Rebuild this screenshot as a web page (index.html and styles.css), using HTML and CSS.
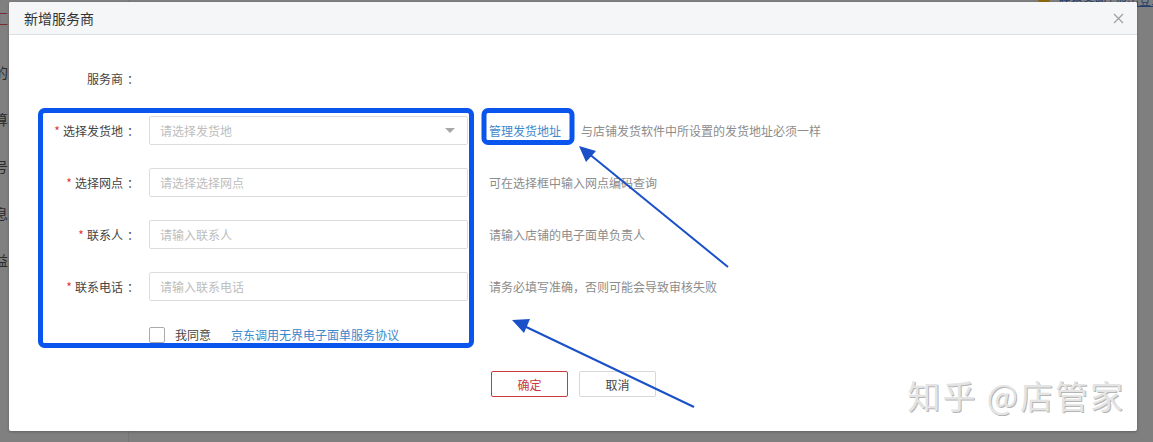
FILE: index.html
```html
<!DOCTYPE html>
<html lang="zh">
<head>
<meta charset="utf-8">
<title>新增服务商</title>
<link rel="stylesheet" href="styles.css">
</head>
<body>
<div class="page">
  <aside class="side">
    <div class="side-item side-red">汇</div>
    <div class="side-item">的</div>
    <div class="side-item">算</div>
    <div class="side-item">号</div>
    <div class="side-item">息</div>
    <div class="side-item">益</div>
  </aside>
  <div class="topbar"><span class="top-dot"></span><span class="top-link">联系客服 | 退出登录</span></div>
</div>

<div class="modal">
  <div class="modal-head">
    <span class="modal-title">新增服务商</span>
    <svg class="close" width="11" height="11" viewBox="0 0 11 11"><path d="M1 1L10 10M10 1L1 10" stroke="#a0a0a0" stroke-width="1.2" fill="none"/></svg>
  </div>
  <div class="modal-body">
    <div class="row">
      <label class="lbl">服务商<span class="colon">：</span></label>
      <div class="field"></div>
    </div>
    <div class="row">
      <label class="lbl"><span class="req">*</span>选择发货地<span class="colon">：</span></label>
      <div class="field select"><span class="ph">请选择发货地</span><span class="caret"></span></div>
      <div class="hint"><a class="link">管理发货地址</a><span class="hint-text after-link">与店铺发货软件中所设置的发货地址必须一样</span></div>
    </div>
    <div class="row">
      <label class="lbl"><span class="req">*</span>选择网点<span class="colon">：</span></label>
      <input class="field input" placeholder="请选择选择网点">
      <div class="hint"><span class="hint-text">可在选择框中输入网点编码查询</span></div>
    </div>
    <div class="row">
      <label class="lbl"><span class="req">*</span>联系人<span class="colon">：</span></label>
      <input class="field input" placeholder="请输入联系人">
      <div class="hint"><span class="hint-text">请输入店铺的电子面单负责人</span></div>
    </div>
    <div class="row">
      <label class="lbl"><span class="req">*</span>联系电话<span class="colon">：</span></label>
      <input class="field input" placeholder="请输入联系电话">
      <div class="hint"><span class="hint-text">请务必填写准确，否则可能会导致审核失败</span></div>
    </div>
    <div class="row agree-row">
      <span class="lbl"></span>
      <div class="agree"><span class="checkbox"></span><span class="agree-text">我同意</span><a class="link">京东调用无界电子面单服务协议</a></div>
    </div>
    <div class="actions">
      <button class="btn btn-ok">确定</button>
      <button class="btn btn-cancel">取消</button>
    </div>
  </div>
  <div class="watermark">知乎 @店管家</div>
</div>

<svg class="notes" width="1153" height="442" viewBox="0 0 1153 442">
  <rect x="40.5" y="110.5" width="431" height="235" rx="4" fill="none" stroke="#0a55ee" stroke-width="5"/>
  <rect x="484" y="110.5" width="88" height="32" rx="4" fill="none" stroke="#0a55ee" stroke-width="5"/>
  <line x1="728" y1="267" x2="588" y2="153" stroke="#1a50c8" stroke-width="2"/>
  <polygon points="579,146 596,151 586,162" fill="#1a50c8"/>
  <line x1="694" y1="407" x2="522" y2="325" stroke="#1a50c8" stroke-width="2"/>
  <polygon points="512,320 530,319 524,333" fill="#1a50c8"/>
</svg>
</body>
</html>
```
FILE: styles.css
```css
html, body {
  margin: 0;
  padding: 0;
}
body {
  width: 1153px;
  height: 442px;
  overflow: hidden;
  background: #7f7f7f;
  font-family: "Noto Sans CJK SC", "Noto Sans", sans-serif;
  position: relative;
}
.page {
  display: flex;
  height: 442px;
}
.side {
  width: 135px;
  margin-left: -6px;
  border-right: 1px solid #777;
  background: #808080;
  padding-top: 9px;
  box-sizing: border-box;
}
.side-item {
  font-size: 14px;
  line-height: 18px;
  height: 47px;
  color: #2b2b2b;
}
.side-red {
  color: #7a2a2a;
  height: 54px;
}
.topbar {
  flex: 1;
  display: flex;
  justify-content: flex-end;
  align-items: flex-start;
  gap: 8px;
  margin-top: -7px;
}
.top-dot {
  width: 12px;
  height: 12px;
  border-radius: 50%;
  background: #8a6a10;
}
.top-link {
  font-size: 12px;
  line-height: 14px;
  color: #223f70;
  text-decoration: underline;
  white-space: nowrap;
  margin-right: -10px;
}

.modal {
  position: absolute;
  left: 9px;
  top: 2px;
  width: 1128px;
  height: 429px;
  background: #fff;
  border-radius: 2px;
  box-shadow: 0 1px 3px rgba(0,0,0,0.25);
  overflow: hidden;
}
.modal-head {
  height: 32px;
  background: #f5f6f7;
  border-bottom: 1px solid #dcdfe3;
  display: flex;
  align-items: center;
  justify-content: space-between;
  padding: 0 13px 0 15px;
}
.modal-title {
  font-size: 14px;
  color: #333;
  line-height: 20px;
}
.close { display: block; }

.modal-body {
  padding-top: 29px;
}
.row {
  display: flex;
  align-items: center;
  height: 29px;
  margin-bottom: 23px;
}
.lbl {
  width: 126px;
  margin-right: 14px;
  text-align: right;
  font-size: 12px;
  color: #444;
  line-height: 29px;
  flex-shrink: 0;
}
.colon {
  margin-left: 4px;
  letter-spacing: -4px;
}
.req {
  color: #e0393e;
  margin-right: 3px;
  font-size: 12px;
}
.field {
  width: 319px;
  height: 29px;
  box-sizing: border-box;
  flex-shrink: 0;
}
.input, .select {
  border: 1px solid #dcdcdc;
  border-radius: 2px;
  padding: 0 10px;
  font-family: inherit;
  font-size: 12px;
  color: #333;
  outline: none;
  margin: 0;
}
.input::placeholder { color: #bdbdbd; }
.select {
  display: flex;
  align-items: center;
  justify-content: space-between;
  padding-right: 12px;
}
.ph { color: #bdbdbd; font-size: 12px; }
.caret {
  width: 0;
  height: 0;
  border-left: 5px solid transparent;
  border-right: 5px solid transparent;
  border-top: 5px solid #a8a8a8;
}
.hint {
  margin-left: 21px;
  font-size: 12px;
  display: flex;
  align-items: center;
}
.hint-text { color: #8c8c8c; }
.after-link { margin-left: 20px; }
.link {
  color: #3c88cc;
  font-size: 12px;
  cursor: pointer;
}
.agree-row {
  margin-top: -4px;
  margin-bottom: 22px;
}
.agree {
  display: flex;
  align-items: center;
  font-size: 12px;
}
.checkbox {
  width: 16px;
  height: 16px;
  box-sizing: border-box;
  border: 1px solid #aaa;
  border-radius: 2px;
  margin-right: 10px;
}
.agree-text {
  color: #444;
  margin-right: 20px;
}
.actions {
  display: flex;
  justify-content: center;
  gap: 11px;
  padding-left: 1px;
}
.btn {
  width: 77px;
  height: 26px;
  box-sizing: border-box;
  background: #fff;
  border-radius: 2px;
  font-family: inherit;
  font-size: 12px;
  padding: 0;
  cursor: pointer;
}
.btn-ok {
  border: 1px solid #c9393c;
  color: #c9393c;
}
.btn-cancel {
  border: 1px solid #d8d8d8;
  color: #444;
}
.watermark {
  position: absolute;
  right: 12px;
  bottom: 16px;
  font-size: 33px;
  line-height: 40px;
  color: #e4e4e4;
  text-shadow: 1px 1px 0 #b4b4b4;
  white-space: nowrap;
  letter-spacing: 2px;
}
.notes {
  position: absolute;
  left: 0;
  top: 0;
  pointer-events: none;
}
```
